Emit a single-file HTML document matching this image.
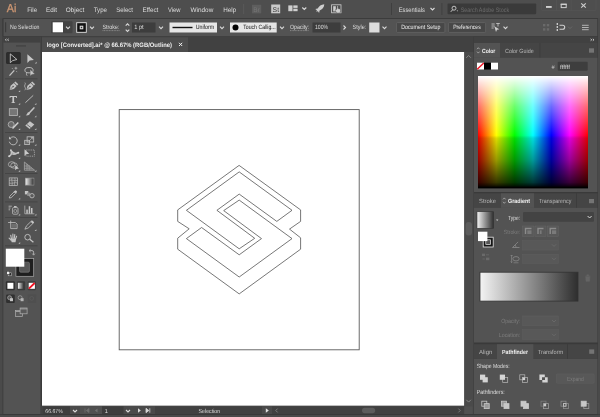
<!DOCTYPE html>
<html><head><meta charset="utf-8">
<style>
*{margin:0;padding:0}
html,body{width:600px;height:417px;overflow:hidden;background:#4a4a4a}
svg{position:absolute;left:0;top:0;display:block;will-change:transform}
text{font-family:"Liberation Sans",sans-serif;font-size:6.6px;fill:#dedede;text-rendering:geometricPrecision}
.b{font-weight:bold}
.dim{fill:#7a7a7a}
</style></head><body>
<svg width="600" height="417" viewBox="0 0 600 417">
<defs>
<linearGradient id="hue" x1="0" x2="1" y1="0" y2="0">
<stop offset="0" stop-color="#f00"/><stop offset="0.167" stop-color="#ff0"/><stop offset="0.333" stop-color="#0f0"/><stop offset="0.5" stop-color="#0ff"/><stop offset="0.667" stop-color="#00f"/><stop offset="0.833" stop-color="#f0f"/><stop offset="1" stop-color="#f00"/>
</linearGradient>
<linearGradient id="wb" x1="0" x2="0" y1="0" y2="1">
<stop offset="0" stop-color="#fff" stop-opacity="1"/><stop offset="0.06" stop-color="#fff" stop-opacity="0.86"/><stop offset="0.27" stop-color="#fff" stop-opacity="0.42"/><stop offset="0.53" stop-color="#fff" stop-opacity="0"/><stop offset="0.53" stop-color="#000" stop-opacity="0"/><stop offset="0.555" stop-color="#000" stop-opacity="0.14"/><stop offset="0.75" stop-color="#000" stop-opacity="0.40"/><stop offset="0.95" stop-color="#000" stop-opacity="0.78"/><stop offset="1" stop-color="#000" stop-opacity="1"/>
</linearGradient>
<linearGradient id="gr" x1="0" x2="1" y1="0" y2="0"><stop offset="0" stop-color="#f4f4f4"/><stop offset="1" stop-color="#2e2e2e"/></linearGradient>
</defs>
<!-- FRAME -->
<g id="frame">
<rect x="0" y="0" width="600" height="417" fill="#4a4a4a"/>
<rect x="0" y="0" width="600" height="18.300" fill="#4e4e4e"/>
<rect x="2.500" y="18.200" width="595.500" height="18.600" fill="#3a3a3a"/>
<rect x="3.300" y="19" width="594" height="17.200" fill="#535353"/>
<!-- tools -->
<rect x="2.500" y="36.800" width="39.500" height="378" fill="#3a3a3a"/>
<rect x="3.300" y="37" width="37.200" height="377" fill="#535353"/>
<rect x="3.300" y="37" width="37.200" height="5.600" fill="#414141"/>
<!-- tab bar -->
<rect x="41.500" y="36.800" width="432.500" height="15.200" fill="#414141"/>
<rect x="42" y="37.300" width="146" height="14.700" fill="#4d4d4d"/>
<!-- canvas -->
<rect x="42" y="52" width="422.300" height="353.800" fill="#ffffff"/>
<rect x="464.300" y="52" width="9.200" height="354" fill="#4a4a4a"/>
<rect x="41.500" y="405.800" width="432.500" height="8.400" fill="#4a4a4a"/>
<!-- dock -->
<rect x="473.500" y="36.800" width="124.500" height="378" fill="#3a3a3a"/>
</g>
<!--MENUBAR-->
<g id="menubar">
<text x="6.700" y="12.100" style="font-size:11.500px;fill:#cc9672;stroke:#cc9672;stroke-width:0.300px" textLength="9.600" lengthAdjust="spacingAndGlyphs">Ai</text>
<g style="font-size:6.6px">
<text x="27.3" y="11.9" textLength="9.8" lengthAdjust="spacingAndGlyphs">File</text>
<text x="46" y="11.9" textLength="10.9" lengthAdjust="spacingAndGlyphs">Edit</text>
<text x="65.7" y="11.9" textLength="18.6" lengthAdjust="spacingAndGlyphs">Object</text>
<text x="93.7" y="11.9" textLength="13.3" lengthAdjust="spacingAndGlyphs">Type</text>
<text x="116.2" y="11.9" textLength="16.8" lengthAdjust="spacingAndGlyphs">Select</text>
<text x="142.5" y="11.9" textLength="15.8" lengthAdjust="spacingAndGlyphs">Effect</text>
<text x="168" y="11.9" textLength="12.5" lengthAdjust="spacingAndGlyphs">View</text>
<text x="190.5" y="11.9" textLength="22.8" lengthAdjust="spacingAndGlyphs">Window</text>
<text x="223.2" y="11.9" textLength="13" lengthAdjust="spacingAndGlyphs">Help</text>
</g>
<rect x="243.3" y="4" width="0.8" height="10" fill="#5c5c5c"/>
<!-- Br -->
<rect x="252" y="4.8" width="9.2" height="8.6" fill="#5e5e5e"/>
<text x="253.300" y="11.500" style="font-size:6.600px;fill:#767676">Br</text>
<!-- St -->
<rect x="271.2" y="4.5" width="9" height="8.8" fill="#c9c9c9"/>
<text x="272.600" y="11.500" style="font-size:6.800px;fill:#3a3a3a">St</text>
<!-- workspace icon -->
<rect x="288.3" y="5.4" width="4.2" height="5.8" fill="#cfcfcf"/>
<rect x="293.3" y="5.4" width="4.3" height="2.5" fill="#cfcfcf"/>
<rect x="293.3" y="8.7" width="4.3" height="2.5" fill="#cfcfcf"/>
<path d="M302.3 7.5l2 2 2-2" fill="none" stroke="#dadada" stroke-width="1.1"/>
<!-- rocket -->
<path d="M324.3 4.2c-3.2 0.2-5.4 2-6.6 4.4l-2.4 0.3 1.6 1.3-0.6 1.5 1.6-0.5 1.2 1.7 0.5-2.4c2.6-1.1 4.5-3 4.7-6.3z" fill="#cfcfcf"/>
<!-- touch -->
<rect x="331.6" y="4.8" width="9.4" height="8" fill="none" stroke="#cfcfcf" stroke-width="0.8"/>
<rect x="333.2" y="6.2" width="2.6" height="5.2" fill="#cfcfcf"/>
<path d="M337 8.2v-2.2c0-.7 1.1-.7 1.1 0v2.6l1.8.5c.6.2.8.6.7 1.2l-.5 2.7h-3.4l-1.5-2.6c-.3-.6.4-1 .9-.5z" fill="#cfcfcf" stroke="#474747" stroke-width="0.4"/>
<!-- essentials -->
<rect x="391" y="3" width="0.8" height="12" fill="#3c3c3c"/>
<text x="398.7" y="11.8" style="font-size:6.6px" textLength="26.3" lengthAdjust="spacingAndGlyphs">Essentials</text>
<path d="M430.5 8l2 2 2-2" fill="none" stroke="#dadada" stroke-width="1.1"/>
<rect x="441.5" y="3" width="0.8" height="12" fill="#3c3c3c"/>
<!-- search -->
<rect x="447.5" y="3.5" width="88.7" height="10.7" rx="1" fill="#3a3a3a"/>
<circle cx="454" cy="8.2" r="2" fill="none" stroke="#cfcfcf" stroke-width="0.9"/>
<path d="M452.6 9.8l-1.8 2" stroke="#cfcfcf" stroke-width="1"/>
<path d="M456.6 10.6h1.6l-.8.9z" fill="#cfcfcf"/>
<text x="460.7" y="11.7" style="font-size:6.4px;fill:#6c6c6c" textLength="48.5" lengthAdjust="spacingAndGlyphs">Search Adobe Stock</text>
<!-- window buttons -->
<path d="M541.400 0v9.400q0 1 1 1h52.600q1 0 1-1v-9.400" fill="none" stroke="#585858" stroke-width="0.600"/>
<rect x="556.200" y="0" width="0.600" height="10.400" fill="#585858"/>
<rect x="570.800" y="0" width="0.600" height="10.400" fill="#585858"/>
<rect x="546" y="6" width="5.700" height="1.900" fill="#cfcfcf"/>
<rect x="561.200" y="4.400" width="5" height="3.200" fill="none" stroke="#cfcfcf" stroke-width="1"/>
<rect x="560.700" y="3.600" width="6" height="1.400" fill="#cfcfcf"/>
<path d="M581.200 3.400l4.600 4.300M585.800 3.400l-4.600 4.300" stroke="#cfcfcf" stroke-width="1.100"/>
</g>
<!--/MENUBAR-->
<!--CTRL-->
<g id="ctrl">
<rect x="2.5" y="19" width="0.8" height="17" fill="#3a3a3a"/>
<rect x="5" y="22.3" width="1.2" height="10" fill="#3c3c3c"/>
<text x="10" y="29.3" style="font-size:6.2px" textLength="29.5" lengthAdjust="spacingAndGlyphs">No Selection</text>
<rect x="51" y="21.2" width="21.5" height="12" rx="1" fill="#434343"/>
<rect x="52.7" y="22.3" width="10.3" height="10" fill="#ffffff"/>
<path d="M66 26.6l2 2 2-2" fill="none" stroke="#dadada" stroke-width="1.1"/>
<rect x="76.7" y="22.7" width="9.6" height="9.6" fill="#111" stroke="#e6e6e6" stroke-width="0.9"/>
<rect x="79.7" y="25.7" width="3.6" height="3.6" fill="#d8d8d8"/>
<rect x="80.8" y="26.8" width="1.4" height="1.4" fill="#333"/>
<path d="M90 26.6l2 2 2-2" fill="none" stroke="#dadada" stroke-width="1.1"/>
<text x="102.5" y="29.3" style="font-size:6.2px" textLength="17" lengthAdjust="spacingAndGlyphs">Stroke:</text>
<path d="M102.5 30.6h17" stroke="#bdbdbd" stroke-width="0.5" stroke-dasharray="1 0.6"/>
<path d="M125.7 25.6l1.8-1.8 1.8 1.8M125.7 29.6l1.8 1.8 1.8-1.8" fill="none" stroke="#dadada" stroke-width="1.1"/>
<rect x="132" y="22.5" width="23.5" height="10" fill="#3d3d3d"/>
<text x="134.2" y="29.3" style="font-size:6.2px" textLength="9.5" lengthAdjust="spacingAndGlyphs">1 pt</text>
<path d="M159 26.6l2 2 2-2" fill="none" stroke="#dadada" stroke-width="1.1"/>
<rect x="169.5" y="22.5" width="47.5" height="10" fill="#e6e6e6"/>
<rect x="172.5" y="26.8" width="20" height="1.4" fill="#111"/>
<text x="195.7" y="29.3" style="font-size:6.200px;fill:#141414" textLength="18.5" lengthAdjust="spacingAndGlyphs">Uniform</text>
<path d="M220 26.6l2 2 2-2" fill="none" stroke="#dadada" stroke-width="1.1"/>
<rect x="230" y="22.5" width="46.7" height="10" fill="#e6e6e6"/>
<circle cx="235.5" cy="27.5" r="3" fill="#000"/>
<text x="243.2" y="29.3" style="font-size:6.200px;fill:#141414" textLength="32.5" lengthAdjust="spacingAndGlyphs">Touch Callig...</text>
<path d="M280 26.6l2 2 2-2" fill="none" stroke="#dadada" stroke-width="1.1"/>
<text x="290" y="29.3" style="font-size:6.2px" textLength="19.2" lengthAdjust="spacingAndGlyphs">Opacity:</text>
<path d="M290 30.6h19.2" stroke="#bdbdbd" stroke-width="0.5" stroke-dasharray="1 0.6"/>
<rect x="312.5" y="22.5" width="28" height="10" fill="#3d3d3d"/>
<text x="315" y="29.3" style="font-size:6.2px" textLength="13" lengthAdjust="spacingAndGlyphs">100%</text>
<path d="M343.5 25.5l2 2-2 2" fill="none" stroke="#dadada" stroke-width="1.1"/>
<text x="352.5" y="29.3" style="font-size:6.2px" textLength="13.7" lengthAdjust="spacingAndGlyphs">Style:</text>
<rect x="369.2" y="22.5" width="10.3" height="10" fill="#dcdcdc"/>
<path d="M382.5 26.6l2 2 2-2" fill="none" stroke="#dadada" stroke-width="1.1"/>
<rect x="396.4" y="22.6" width="48.5" height="9.8" rx="1" fill="#474747" stroke="#686868" stroke-width="0.7"/>
<text x="401.2" y="29.3" style="font-size:6.2px;fill:#f0f0f0" textLength="39.3" lengthAdjust="spacingAndGlyphs">Document Setup</text>
<rect x="448.4" y="22.6" width="37.3" height="9.8" rx="1" fill="#474747" stroke="#686868" stroke-width="0.7"/>
<text x="453.2" y="29.3" style="font-size:6.2px;fill:#f0f0f0" textLength="27.5" lengthAdjust="spacingAndGlyphs">Preferences</text>
<!-- align icon -->
<path d="M491.5 24h3.2M491.5 26h3.2M491.5 28h2.2M496.2 23.5h3.6M498 23.5v3" stroke="#cfcfcf" stroke-width="0.8" fill="none"/>
<path d="M494.3 26.2l5 3-2.3.5-1 2.2z" fill="#cfcfcf"/>
<path d="M503.5 26.6l2 2 2-2" fill="none" stroke="#dadada" stroke-width="1.1"/>
<!-- right icons -->
<g fill="#6a6a6a"><rect x="543" y="24" width="2.4" height="2.4"/><rect x="546.8" y="24" width="2.4" height="2.4"/><rect x="543" y="28.2" width="2.4" height="2.4"/><rect x="546.8" y="28.2" width="2.4" height="2.4"/></g>
<path d="M557.3 23v9" stroke="#cfcfcf" stroke-width="1.3" stroke-dasharray="2 1"/>
<path d="M559.5 25.3h3.2a1.8 1.8 0 0 1 0 4h-3.2" fill="none" stroke="#cfcfcf" stroke-width="1.1"/>
<path d="M568 26.6l2 2 2-2" fill="none" stroke="#6a6a6a" stroke-width="0.9"/>
<path d="M582 25.3h6.7M582 27.5h6.7M582 29.7h6.7" stroke="#bdbdbd" stroke-width="0.9"/>
</g>
<!--/CTRL-->
<!--TOOLS-->
<g id="tools">
<path d="M6.500 38.900l-1.200 .900 1.200 .900M8.700 38.900l-1.200 .900 1.200 .900" fill="none" stroke="#dcdcdc" stroke-width="0.800"/>
<rect x="16" y="45.4" width="10" height="1" fill="#3e3e3e"/>
<g fill="#3f3f3f"><rect x="5" y="78.5" width="32.5" height="0.7"/><rect x="5" y="132" width="32.5" height="0.7"/><rect x="5" y="173" width="32.5" height="0.7"/><rect x="5" y="201.6" width="32.5" height="0.7"/><rect x="5" y="217" width="32.5" height="0.7"/><rect x="5" y="245.5" width="32.5" height="0.7"/></g>
<!-- flyout triangles -->
<g fill="#bdbdbd">
<path d="M36.6 61.8v1.8h-1.8z"/>
<path d="M20.2 90.2v1.8h-1.8z"/>
<path d="M20.2 102.9v1.8h-1.8z"/><path d="M36.4 102.9v1.8h-1.8z"/>
<path d="M20.2 115.5v1.8h-1.8z"/><path d="M36.4 115.5v1.8h-1.8z"/>
<path d="M20.2 128.2v1.8h-1.8z"/><path d="M36.4 128.2v1.8h-1.8z"/>
<path d="M20.2 144v1.8h-1.8z"/><path d="M36.4 144v1.8h-1.8z"/>
<path d="M20.2 157.2v1.8h-1.8z"/>
<path d="M20.2 169.9v1.8h-1.8z"/><path d="M36.4 169.9v1.8h-1.8z"/>
<path d="M20.2 197.7v1.8h-1.8z"/>
<path d="M20.2 213.8v1.8h-1.8z"/><path d="M36.4 213.8v1.8h-1.8z"/>
<path d="M36.4 229.3v1.8h-1.8z"/>
<path d="M20.2 242v1.8h-1.8z"/>
</g>
<!-- selection -->
<rect x="6" y="52" width="14.8" height="12" rx="1.5" fill="#2d2d2d"/>
<path d="M10.3 53.9v8.8l2.4-2.1 4.2-1.1z" fill="none" stroke="#c4c4c4" stroke-width="0.9" stroke-linejoin="round"/>
<!-- direct selection -->
<path d="M27.4 54.3v8.6l2.3-2.3 4.2-.6z" fill="#c8c8c8"/>
<!-- magic wand -->
<path d="M9.5 75.6l4.8-5.2" stroke="#c4c4c4" stroke-width="1.3"/>
<path d="M15.9 66.8v2.8M14.5 68.2h2.8M12 68.2l1 1M16.3 71.2l.9 .9" stroke="#c4c4c4" stroke-width="0.7"/>
<!-- lasso -->
<ellipse cx="29" cy="70.2" rx="4.1" ry="2.7" fill="none" stroke="#c4c4c4" stroke-width="0.9"/>
<path d="M27 72.6c-1 .8-.6 2.4 .2 3.2" fill="none" stroke="#c4c4c4" stroke-width="0.8"/>
<path d="M30.2 69.6v6.4l1.6-1.6 3-.4z" fill="#c8c8c8" stroke="#4b4b4b" stroke-width="0.3"/>
<!-- pen -->
<g id="nib"><path d="M9.6 90l1-4.2 3.3-2.8 2.8 2.9-2.8 3.2z" fill="#c4c4c4"/><path d="M14.2 82.6l1.2-1.2 2.9 2.9-1.2 1.2z" fill="#c4c4c4"/><path d="M9.9 89.7l3-3" stroke="#4b4b4b" stroke-width="0.6"/><circle cx="13.1" cy="86.5" r="0.7" fill="#4b4b4b"/></g>
<use href="#nib" x="16.8" y="0"/>
<path d="M24.9 82.6c1.6 1.2-1.4 3 .1 4.600c.9 1 .4 2.300-.2 3" fill="none" stroke="#c4c4c4" stroke-width="0.7"/>
<!-- type -->
<path d="M9.600 96h7.300v1.900h-.7l-.3-.9h-1.800v5.200l1 .2v.6h-3.700v-.6l1-.2v-5.200h-1.800l-.3.900h-.7z" fill="#c8c8c8"/>
<!-- line -->
<path d="M25.400 102.700l7.800-7.300" stroke="#c4c4c4" stroke-width="0.9"/>
<!-- rect -->
<rect x="9.300" y="108.700" width="8.200" height="6.700" fill="#767676" stroke="#b8b8b8" stroke-width="0.8"/>
<!-- brush -->
<path d="M33.900 107.900l-5 5.300" stroke="#c4c4c4" stroke-width="1.500" stroke-linecap="round"/>
<path d="M28.700 112.300c-1.600 0-1.300 2.300-3 3c1.800 .5 4-.3 4.200-1.800z" fill="#c4c4c4"/>
<!-- shaper -->
<circle cx="11.200" cy="124.500" r="3" fill="#6a6a6a" stroke="#b8b8b8" stroke-width="0.800"/>
<path d="M12.500 128.400l5.800-6" stroke="#d0d0d0" stroke-width="1.500"/>
<!-- eraser -->
<path d="M25.300 125.600l4.600-4.400 4.400 3.200-4.700 4.500z" fill="#c4c4c4"/>
<path d="M26.700 124.300l4.200 3.300" stroke="#4b4b4b" stroke-width="0.700"/>
<!-- rotate -->
<path d="M10.200 138.200a4 4 0 1 1-.9 3.500" fill="none" stroke="#c0c0c0" stroke-width="0.900"/>
<path d="M9 136.600v2.600h2.600z" fill="#c0c0c0"/>
<!-- scale -->
<rect x="24.700" y="140.300" width="4.800" height="4.300" fill="#6a6a6a" stroke="#c0c0c0" stroke-width="0.800"/>
<rect x="27.100" y="136.800" width="6.600" height="5.200" fill="none" stroke="#c0c0c0" stroke-width="0.800"/>
<path d="M29 141l3.600-3.400M30.800 137.500h2v2" stroke="#c0c0c0" stroke-width="0.700" fill="none"/>
<!-- width -->
<path d="M9.300 156.200c1.800-.8 2.600-2.600 1.800-5.400c2 2.600 4.800 3.300 7.300 1.900" fill="none" stroke="#c0c0c0" stroke-width="1.500" stroke-linecap="round"/>
<path d="M11.600 153.600c1.600 .9 3.600 .7 5-.2" fill="none" stroke="#c0c0c0" stroke-width="1.300"/>
<circle cx="10.900" cy="150.200" r="0.900" fill="#d0d0d0"/><circle cx="9.200" cy="156.200" r="1" fill="#d0d0d0"/><circle cx="18.300" cy="152.700" r="0.900" fill="#d0d0d0"/>
<!-- free transform -->
<rect x="25.800" y="150" width="8.600" height="6.200" fill="none" stroke="#c0c0c0" stroke-width="0.700" stroke-dasharray="1 0.800"/>
<path d="M24.500 149.300v6.600l1.800-1.700 3-.5z" fill="#c8c8c8"/>
<!-- shape builder -->
<ellipse cx="11.700" cy="164.400" rx="3.300" ry="2.700" fill="none" stroke="#c0c0c0" stroke-width="0.700"/>
<ellipse cx="14" cy="165.500" rx="3.300" ry="2.700" fill="none" stroke="#c0c0c0" stroke-width="0.700"/>
<path d="M15.200 165v5.200l1.300-1.300 2.400-.3z" fill="#c8c8c8"/>
<!-- perspective grid -->
<path d="M24.400 162v8.200h10.200zM24.400 166h4.800M24.400 168.200h7.500M27 163.800v6.400M29.300 165.600v4.600" fill="none" stroke="#b0b0b0" stroke-width="0.700"/>
<path d="M24.400 162l10.200 8.200h-6z" fill="#8a8a8a" opacity="0.600"/>
<!-- mesh -->
<rect x="9.200" y="177.900" width="8.400" height="7.600" fill="#5a5a5a" stroke="#c0c0c0" stroke-width="0.700"/>
<path d="M9.200 180.400c2.800-1.200 5.600 1.200 8.400 0M9.200 183c2.800 1.200 5.600-1.200 8.400 0M12 177.900c-1 2.500 1 5 0 7.600M14.800 177.900c1 2.500-1 5 0 7.600" fill="none" stroke="#c0c0c0" stroke-width="0.600"/>
<!-- gradient -->
<rect x="25.300" y="178.100" width="8.600" height="7" fill="url(#gr)" stroke="#9a9a9a" stroke-width="0.600"/>
<!-- eyedropper -->
<path d="M9.300 198l.4-1.700 4.400-4.400 1.500 1.500-4.500 4.300z" fill="none" stroke="#c4c4c4" stroke-width="0.800"/>
<path d="M13.600 191.400l2.200-1.200 1.300 1.200-1 2.200z" fill="#c4c4c4"/>
<!-- blend -->
<rect x="24.900" y="191" width="3.400" height="3.400" fill="#c4c4c4"/>
<rect x="27" y="192.500" width="3.400" height="3.400" rx="1" fill="#8c8c8c"/>
<circle cx="32" cy="195.700" r="2.200" fill="#5a5a5a" stroke="#c4c4c4" stroke-width="0.800"/>
<!-- symbol sprayer -->
<rect x="12.600" y="207.600" width="5.400" height="6.600" rx="1" fill="none" stroke="#c0c0c0" stroke-width="0.800"/>
<path d="M14 207.500v-1.500h2.600v1.500" fill="#c0c0c0"/>
<circle cx="15.300" cy="211" r="1.500" fill="none" stroke="#c0c0c0" stroke-width="0.600"/>
<path d="M8.600 206.200h3.200M8.600 208h2M8.600 209.800h1.400" stroke="#c0c0c0" stroke-width="0.800"/>
<!-- graph -->
<path d="M24.800 205.600v8.200h9.600" fill="none" stroke="#c0c0c0" stroke-width="0.700"/>
<rect x="26.300" y="209.600" width="1.500" height="4" fill="#c4c4c4"/><rect x="28.700" y="206.200" width="1.500" height="7.400" fill="#c4c4c4"/><rect x="31" y="208" width="1.500" height="5.600" fill="#c4c4c4"/>
<!-- artboard -->
<path d="M10.700 220.600v8h6.400v-4.600l-1.800-1.500h-7.200" fill="none" stroke="#c0c0c0" stroke-width="0.800"/>
<rect x="11.400" y="223.800" width="4.600" height="4" fill="#6e6e6e"/>
<!-- slice -->
<path d="M24.900 229.200l1.600-3.400 5-4.800 2.300 1.600-5.600 5.400z" fill="none" stroke="#c4c4c4" stroke-width="0.800"/>
<path d="M30.600 221.800l1.700-1.300 1.800 1.700-1.400 1.500z" fill="#c4c4c4"/>
<!-- hand -->
<path d="M10.400 238.200l5.800 .300-.700 3.800h-3.800z" fill="#c4c4c4"/>
<path d="M11 240.200l-1.900-2M11.400 238.500l-.700-3.300M12.900 238v-4M14.300 238.200l.500-3.600M15.500 239l1.100-2.700" stroke="#c4c4c4" stroke-width="1.100" stroke-linecap="round" fill="none"/>
<!-- zoom -->
<circle cx="27.600" cy="237.200" r="2.800" fill="none" stroke="#c4c4c4" stroke-width="0.900"/>
<path d="M29.800 239.300l3.600 2.900" stroke="#c4c4c4" stroke-width="1.300"/>
<!-- fill/stroke -->
<rect x="15.900" y="258.500" width="17.800" height="17.800" fill="#1f1f1f" stroke="#a8a8a8" stroke-width="0.700"/>
<rect x="19.600" y="262.200" width="9.800" height="10" rx="1.200" fill="#565656" stroke="#7a7a7a" stroke-width="0.700"/>
<rect x="5.800" y="248.700" width="18.500" height="18" fill="#ffffff"/>
<path d="M29.600 250.600h2.400a1.600 1.600 0 0 1 1.600 1.600v2.400" fill="none" stroke="#c4c4c4" stroke-width="0.800"/>
<path d="M30.600 249.300l-1.600 1.300 1.600 1.300M32.300 253.600l1.300 1.600 1.300-1.600" fill="none" stroke="#c4c4c4" stroke-width="0.700"/>
<rect x="8.200" y="272.800" width="3" height="3" fill="#222" stroke="#cfcfcf" stroke-width="0.500"/>
<rect x="6.800" y="271.400" width="3" height="3" fill="#f0f0f0" stroke="#222" stroke-width="0.400"/>
<!-- color/gradient/none -->
<rect x="5.900" y="281.300" width="9" height="9" rx="1" fill="#2e2e2e"/>
<rect x="7.400" y="282.800" width="6" height="6" fill="#ffffff"/>
<rect x="17.100" y="281.300" width="8" height="9" rx="1" fill="#3a3a3a"/>
<rect x="17.900" y="282.800" width="6" height="6" fill="url(#gr)"/>
<rect x="27.700" y="281.300" width="8.200" height="9" rx="1" fill="#3e3e3e"/>
<rect x="28.700" y="282.800" width="6.200" height="6" fill="#ffffff"/>
<path d="M28.900 288.600l5.800-5.600" stroke="#f01020" stroke-width="1.800"/>
<!-- draw modes -->
<rect x="6.100" y="294.500" width="8.700" height="8.500" rx="1" fill="#303030"/>
<circle cx="9.600" cy="297.700" r="2" fill="#5a5a5a" stroke="#c4c4c4" stroke-width="0.600"/><rect x="10" y="298.200" width="3" height="3" fill="#c4c4c4"/>
<circle cx="20.100" cy="297.700" r="2" fill="none" stroke="#b4b4b4" stroke-width="0.600"/><rect x="20.600" y="298.200" width="3" height="3" fill="#b4b4b4"/>
<rect x="27.800" y="294.500" width="8.400" height="8.500" rx="1" fill="#4f4f4f"/>
<circle cx="31.700" cy="298.400" r="1.900" fill="none" stroke="#5e5e5e" stroke-width="0.600"/>
<!-- screen mode -->
<rect x="15.600" y="310.600" width="7" height="5.800" fill="#5a5a5a" stroke="#b0b0b0" stroke-width="0.700"/>
<rect x="20.100" y="308" width="7" height="5.800" fill="#5a5a5a" stroke="#b0b0b0" stroke-width="0.700"/>
<path d="M20.100 308.900h7M15.600 311.500h4.500" stroke="#b0b0b0" stroke-width="0.800"/>
</g>
<!--/TOOLS-->
<!--DOC-->
<g id="doc">
<text x="46.7" y="47.2" class="b" style="font-size:6.3px;fill:#efefef" textLength="125.3" lengthAdjust="spacingAndGlyphs">logo [Converted].ai* @ 66.67% (RGB/Outline)</text>
<path d="M179 42.8l3.2 3.2M182.2 42.8l-3.2 3.2" stroke="#f0f0f0" stroke-width="1"/>
<!-- artboard -->
<rect x="119.2" y="109.6" width="240" height="240.2" fill="none" stroke="#5a5a5a" stroke-width="0.9"/>
<!-- logo -->
<g fill="none" stroke="#4a4a4a" stroke-width="0.75" stroke-linejoin="miter">
<path d="M239.1 165.4L300.6 209.9V221.4L289.5 229.1L300.6 237.8V249.2L239.2 293.9L177.7 249.2V238.2L189.2 228.8L177.7 221.4V209.9Z"/>
<path d="M239.2 171.9L292 210.3L276.8 221.4L239.2 194.1L216.9 210.3L254.7 238.3L239.2 248.8L186.4 210.3Z"/>
<path d="M239.2 277L186.4 238.6L201.6 227.5L239.2 254.8L261.5 238.6L223.7 210.6L239.2 200.1L292 238.6Z"/>
</g>
<!-- vscroll -->
<rect x="465.6" y="222" width="6.4" height="13.4" rx="3" fill="#5c5c5c"/>
<path d="M466.3 57.8l2.3-2.3 2.3 2.3" fill="none" stroke="#8a8a8a" stroke-width="0.9"/>
<path d="M466.3 399.8l2.3 2.3 2.3-2.3" fill="none" stroke="#8a8a8a" stroke-width="0.9"/>
<!-- status -->
<rect x="41" y="414" width="433" height="1" fill="#3a3a3a"/>
<rect x="42.4" y="406.4" width="27.6" height="7.6" fill="#3d3d3d"/>
<text x="45.3" y="413" style="font-size:5.6px" textLength="17.4" lengthAdjust="spacingAndGlyphs">66.67%</text>
<path d="M73 410l2 2 2-2" fill="none" stroke="#dadada" stroke-width="1.1"/>
<rect x="80" y="406.4" width="22" height="7.6" fill="#505050"/>
<path d="M85 408.5v4M89 408.5l-2.6 2 2.6 2z" stroke="#707070" stroke-width="0.8" fill="#707070"/>
<path d="M97.5 408.5l-2.6 2 2.6 2z" fill="#707070"/>
<rect x="102" y="406.4" width="21.5" height="7.6" fill="#3d3d3d"/>
<text x="104.7" y="413" style="font-size:5.6px">1</text>
<path d="M126 410l2 2 2-2" fill="none" stroke="#dadada" stroke-width="1.1"/>
<path d="M138 408.3l2.8 2.2-2.8 2.2z" fill="#d8d8d8"/>
<path d="M146 408.3l2.8 2.2-2.8 2.2zM149.8 408.3v4.4" fill="#d8d8d8" stroke="#d8d8d8" stroke-width="0.8"/>
<rect x="155" y="406.4" width="107" height="7.6" fill="#414141"/>
<text x="198.6" y="412.8" style="font-size:5.8px" textLength="21.6" lengthAdjust="spacingAndGlyphs">Selection</text>
<path d="M265.8 408.2l3 2.3-3 2.3z" fill="#e0e0e0"/>
<rect x="272" y="406.400" width="192.300" height="7.800" fill="#414141"/>
<path d="M277.600 408.600l-1.800 1.900 1.800 1.900" fill="none" stroke="#808080" stroke-width="0.900"/>
<rect x="362" y="407.800" width="13.200" height="5.400" rx="2.700" fill="#5c5c5c"/>
<path d="M458.400 408.600l1.800 1.900-1.800 1.900" fill="none" stroke="#808080" stroke-width="0.900"/>
<rect x="464.300" y="406.400" width="8.200" height="7.800" fill="#505050"/>
</g>
<!--/DOC-->
<!--DOCK-->
<g id="dock">
<!-- header -->
<rect x="474" y="37" width="123.500" height="6" fill="#414141"/>
<path d="M590.600 38.900l1.200 .900-1.200 .900M592.800 38.900l1.200 .900-1.200 .900" fill="none" stroke="#dcdcdc" stroke-width="0.800"/>
<!-- color panel -->
<rect x="474" y="43" width="123.500" height="14.600" fill="#454545"/>
<rect x="474" y="57.600" width="123.500" height="134.400" fill="#535353"/>
<rect x="474" y="43" width="26" height="14.800" fill="#535353"/>
<rect x="539.600" y="43" width="0.700" height="14.600" fill="#3a3a3a"/>
<path d="M477 49.200l1.300-1.500 1.300 1.500M477 51.600l1.300 1.500 1.300-1.500" fill="none" stroke="#bdbdbd" stroke-width="0.700"/>
<text x="482" y="52.800" class="b" style="font-size:6px;fill:#f0f0f0" textLength="13.300" lengthAdjust="spacingAndGlyphs">Color</text>
<text x="505" y="52.800" style="font-size:6px;fill:#b8b8b8" textLength="28.700" lengthAdjust="spacingAndGlyphs">Color Guide</text>
<rect x="589" y="48.300" width="5" height="4.400" fill="#747474"/>
<rect x="477" y="62.700" width="7" height="6.800" fill="#fff"/><path d="M477.200 69.300l6.600-6.400" stroke="#f01020" stroke-width="1.400"/>
<rect x="484" y="62.700" width="7" height="6.800" fill="#000"/>
<rect x="491" y="62.700" width="7" height="6.800" fill="#fff"/>
<text x="551.500" y="68.600" style="font-size:5.600px;fill:#c8c8c8;font-style:italic">#</text>
<rect x="557.700" y="61.700" width="30" height="9" rx="1" fill="#3e3e3e"/>
<text x="560" y="68.600" style="font-size:5.800px" textLength="10" lengthAdjust="spacingAndGlyphs">ffffff</text>
<rect x="478" y="76" width="110" height="112" fill="url(#hue)"/>
<rect x="478" y="76" width="110" height="112" fill="url(#wb)"/>
<rect x="478" y="186.800" width="110" height="1.600" fill="#000"/>
<!-- gradient panel -->
<rect x="474" y="193.300" width="123.500" height="14.400" fill="#454545"/>
<rect x="474" y="207.700" width="123.500" height="134.800" fill="#535353"/>
<rect x="501" y="193.300" width="33" height="14.600" fill="#535353"/>
<rect x="576" y="193.300" width="0.700" height="14.400" fill="#383838"/>
<text x="479" y="203" style="font-size:6px;fill:#b8b8b8" textLength="17" lengthAdjust="spacingAndGlyphs">Stroke</text>
<path d="M503 199.400l1.300-1.500 1.300 1.500M503 201.800l1.300 1.500 1.300-1.500" fill="none" stroke="#bdbdbd" stroke-width="0.700"/>
<text x="508" y="203" class="b" style="font-size:6px;fill:#f0f0f0" textLength="22" lengthAdjust="spacingAndGlyphs">Gradient</text>
<text x="539" y="203" style="font-size:6px;fill:#b8b8b8" textLength="32.300" lengthAdjust="spacingAndGlyphs">Transparency</text>
<rect x="589" y="199" width="5" height="4.200" fill="#747474"/>
<rect x="477" y="211.700" width="16.600" height="16.600" fill="url(#gr)" stroke="#333" stroke-width="0.600"/>
<path d="M496 219.600h2.400l-1.200 1.400z" fill="#cfcfcf"/>
<text x="508" y="219.800" style="font-size:6px" textLength="12.300" lengthAdjust="spacingAndGlyphs">Type:</text>
<rect x="523" y="212" width="71" height="9.700" rx="1" fill="#434343"/>
<path d="M587.600 216l2 2 2-2" fill="none" stroke="#d8d8d8" stroke-width="1"/>
<rect x="483.200" y="237.200" width="10" height="9.800" fill="#161616" stroke="#e8e8e8" stroke-width="0.800"/>
<rect x="485.800" y="239.800" width="4.800" height="4.600" fill="#535353" stroke="#e8e8e8" stroke-width="0.700"/>
<rect x="478" y="231.700" width="9.400" height="9.400" fill="#fff"/>
<text x="503.700" y="233.700" style="font-size:6px;fill:#7c7c7c" textLength="16.600" lengthAdjust="spacingAndGlyphs">Stroke:</text>
<g fill="#595959" stroke="#666" stroke-width="0.500"><rect x="522.700" y="226" width="11.300" height="10.300"/><rect x="535" y="226" width="11" height="10.300"/><rect x="547.400" y="226" width="11" height="10.300"/></g>
<g fill="none" stroke="#8c8c8c" stroke-width="1.400"><path d="M525.500 234v-5.500h6"/><path d="M538 234v-5.500h5.500"/><path d="M550.200 234v-5.500h6"/></g>
<g fill="#7a7a7a"><rect x="527.300" y="230.300" width="4.200" height="3.700"/><rect x="539.800" y="230.300" width="1.800" height="3.700"/><rect x="552" y="230.300" width="4.200" height="3.700"/></g>
<path d="M512.500 247.500h7M512.500 247.500l5.600-5.600M516 247.500a3.500 3.500 0 0 0-1-2.500" fill="none" stroke="#8a8a8a" stroke-width="0.800"/>
<rect x="522.700" y="240.600" width="36" height="9.400" fill="#585858" stroke="#5f5f5f" stroke-width="0.500"/>
<path d="M552 244.400l2 2 2-2" fill="none" stroke="#6a6a6a" stroke-width="0.900"/>
<ellipse cx="516" cy="258.800" rx="3.200" ry="2.200" fill="none" stroke="#8a8a8a" stroke-width="0.800"/>
<path d="M511.600 255v7.600M510.600 256l1-1 1 1M510.600 261.600l1 1 1-1M513.500 262.800h5" fill="none" stroke="#8a8a8a" stroke-width="0.700"/>
<rect x="522.700" y="254.200" width="36" height="9.200" fill="#585858" stroke="#5f5f5f" stroke-width="0.500"/>
<path d="M552 257.800l2 2 2-2" fill="none" stroke="#6a6a6a" stroke-width="0.900"/>
<g fill="#6a6a6a"><rect x="482" y="253.600" width="3" height="2.400"/><rect x="486" y="257.600" width="3.400" height="2.600"/><path d="M486 254.800h3M482.500 259h2.400" stroke="#6a6a6a" stroke-width="0.800"/></g>
<rect x="480" y="272.200" width="98" height="28.900" fill="url(#gr)" stroke="#333" stroke-width="0.800"/>
<path d="M585 276.200h5.600M586.800 276v-1.200h2v1.200M585.700 276.800l.3 4.500h3.600l.3-4.500z" fill="#646464" stroke="#646464" stroke-width="0.500"/>
<text x="501.200" y="323" style="font-size:6px;fill:#7c7c7c" textLength="19" lengthAdjust="spacingAndGlyphs">Opacity:</text>
<rect x="522.700" y="316" width="36" height="9.600" fill="#585858" stroke="#5f5f5f" stroke-width="0.500"/>
<path d="M552 320l2 2 2-2" fill="none" stroke="#6a6a6a" stroke-width="0.900"/>
<text x="498.800" y="337" style="font-size:6px;fill:#7c7c7c" textLength="21.500" lengthAdjust="spacingAndGlyphs">Location:</text>
<rect x="522.700" y="329.500" width="36" height="10" fill="#585858" stroke="#5f5f5f" stroke-width="0.500"/>
<path d="M552 333.800l2 2 2-2" fill="none" stroke="#6a6a6a" stroke-width="0.900"/>
<!-- pathfinder panel -->
<rect x="474" y="344.200" width="123.500" height="14.600" fill="#454545"/>
<rect x="474" y="358.800" width="123.500" height="55.200" fill="#535353"/>
<rect x="497" y="344.200" width="36.300" height="14.800" fill="#535353"/>
<rect x="567.300" y="344.200" width="0.700" height="14.600" fill="#383838"/>
<text x="479" y="354" style="font-size:6px;fill:#b8b8b8" textLength="13.300" lengthAdjust="spacingAndGlyphs">Align</text>
<text x="502" y="354" class="b" style="font-size:6px;fill:#f0f0f0" textLength="26" lengthAdjust="spacingAndGlyphs">Pathfinder</text>
<text x="537.800" y="354" style="font-size:6px;fill:#b8b8b8" textLength="25.400" lengthAdjust="spacingAndGlyphs">Transform</text>
<rect x="589.200" y="349.400" width="5" height="4.400" fill="#747474"/>
<text x="476.800" y="368.400" style="font-size:6px" textLength="33" lengthAdjust="spacingAndGlyphs">Shape Modes:</text>
<!-- shape mode icons -->
<g>
<rect x="480" y="374.600" width="5.200" height="5.200" fill="#d4d4d4"/><rect x="482.600" y="377.200" width="5.200" height="5.200" fill="#d4d4d4"/>
<rect x="502.700" y="377.400" width="5" height="5" fill="none" stroke="#b8b8b8" stroke-width="0.700"/><rect x="499.800" y="374.600" width="5.200" height="5.200" fill="#d4d4d4"/>
<rect x="519.800" y="374.800" width="5" height="5" fill="none" stroke="#b8b8b8" stroke-width="0.700"/><rect x="522.600" y="377.600" width="5" height="5" fill="none" stroke="#b8b8b8" stroke-width="0.700"/><rect x="522.600" y="377.600" width="2.400" height="2.400" fill="#d4d4d4"/>
<path d="M539.400 374.600h5.400v2.600h-2.800v2.800h-2.600zM545 377.200h2.700v5.400h-5.400v-2.500h2.700z" fill="#d4d4d4"/>
</g>
<rect x="556.400" y="374" width="37.800" height="9.200" rx="1" fill="#585858" stroke="#606060" stroke-width="0.600"/>
<text x="567" y="380.800" style="font-size:6px;fill:#7c7c7c" textLength="16.700" lengthAdjust="spacingAndGlyphs">Expand</text>
<text x="476.800" y="393.800" style="font-size:6px" textLength="28" lengthAdjust="spacingAndGlyphs">Pathfinders:</text>
<g fill="none" stroke="#c8c8c8" stroke-width="0.800">
<rect x="481.800" y="401.200" width="5" height="5"/><rect x="484.200" y="403.600" width="5" height="5" fill="#9a9a9a"/>
<rect x="501.400" y="401.200" width="5" height="5" fill="#9a9a9a"/><rect x="504" y="403.600" width="5" height="5" fill="#c8c8c8"/>
<rect x="521" y="401.200" width="5" height="5" fill="#c8c8c8"/><rect x="523.600" y="403.600" width="5" height="5" fill="#c8c8c8"/>
<rect x="541" y="401.200" width="5" height="5" stroke="#7a7a7a"/><rect x="543.600" y="403.600" width="5" height="5" stroke="#9a9a9a"/><rect x="543.600" y="403.600" width="2.400" height="2.600" fill="#c8c8c8" stroke="none"/>
<rect x="561" y="401.200" width="5" height="5" stroke="#8a8a8a"/><rect x="563.600" y="403.600" width="5" height="5" stroke="#8a8a8a"/><rect x="563.600" y="403.600" width="2.400" height="2.600" stroke="#c8c8c8"/>
<rect x="583.800" y="403.600" width="5" height="5" stroke="#9a9a9a"/><rect x="581.200" y="401.200" width="5" height="5" fill="#c8c8c8"/>
</g>
<rect x="598" y="18.300" width="2" height="399" fill="#4a4a4a"/>
<rect x="0" y="414.200" width="600" height="0.900" fill="#3a3a3a"/>
<rect x="0" y="415" width="600" height="2" fill="#4a4a4a"/>
</g>
<!--/DOCK-->
</svg>
</body></html>
